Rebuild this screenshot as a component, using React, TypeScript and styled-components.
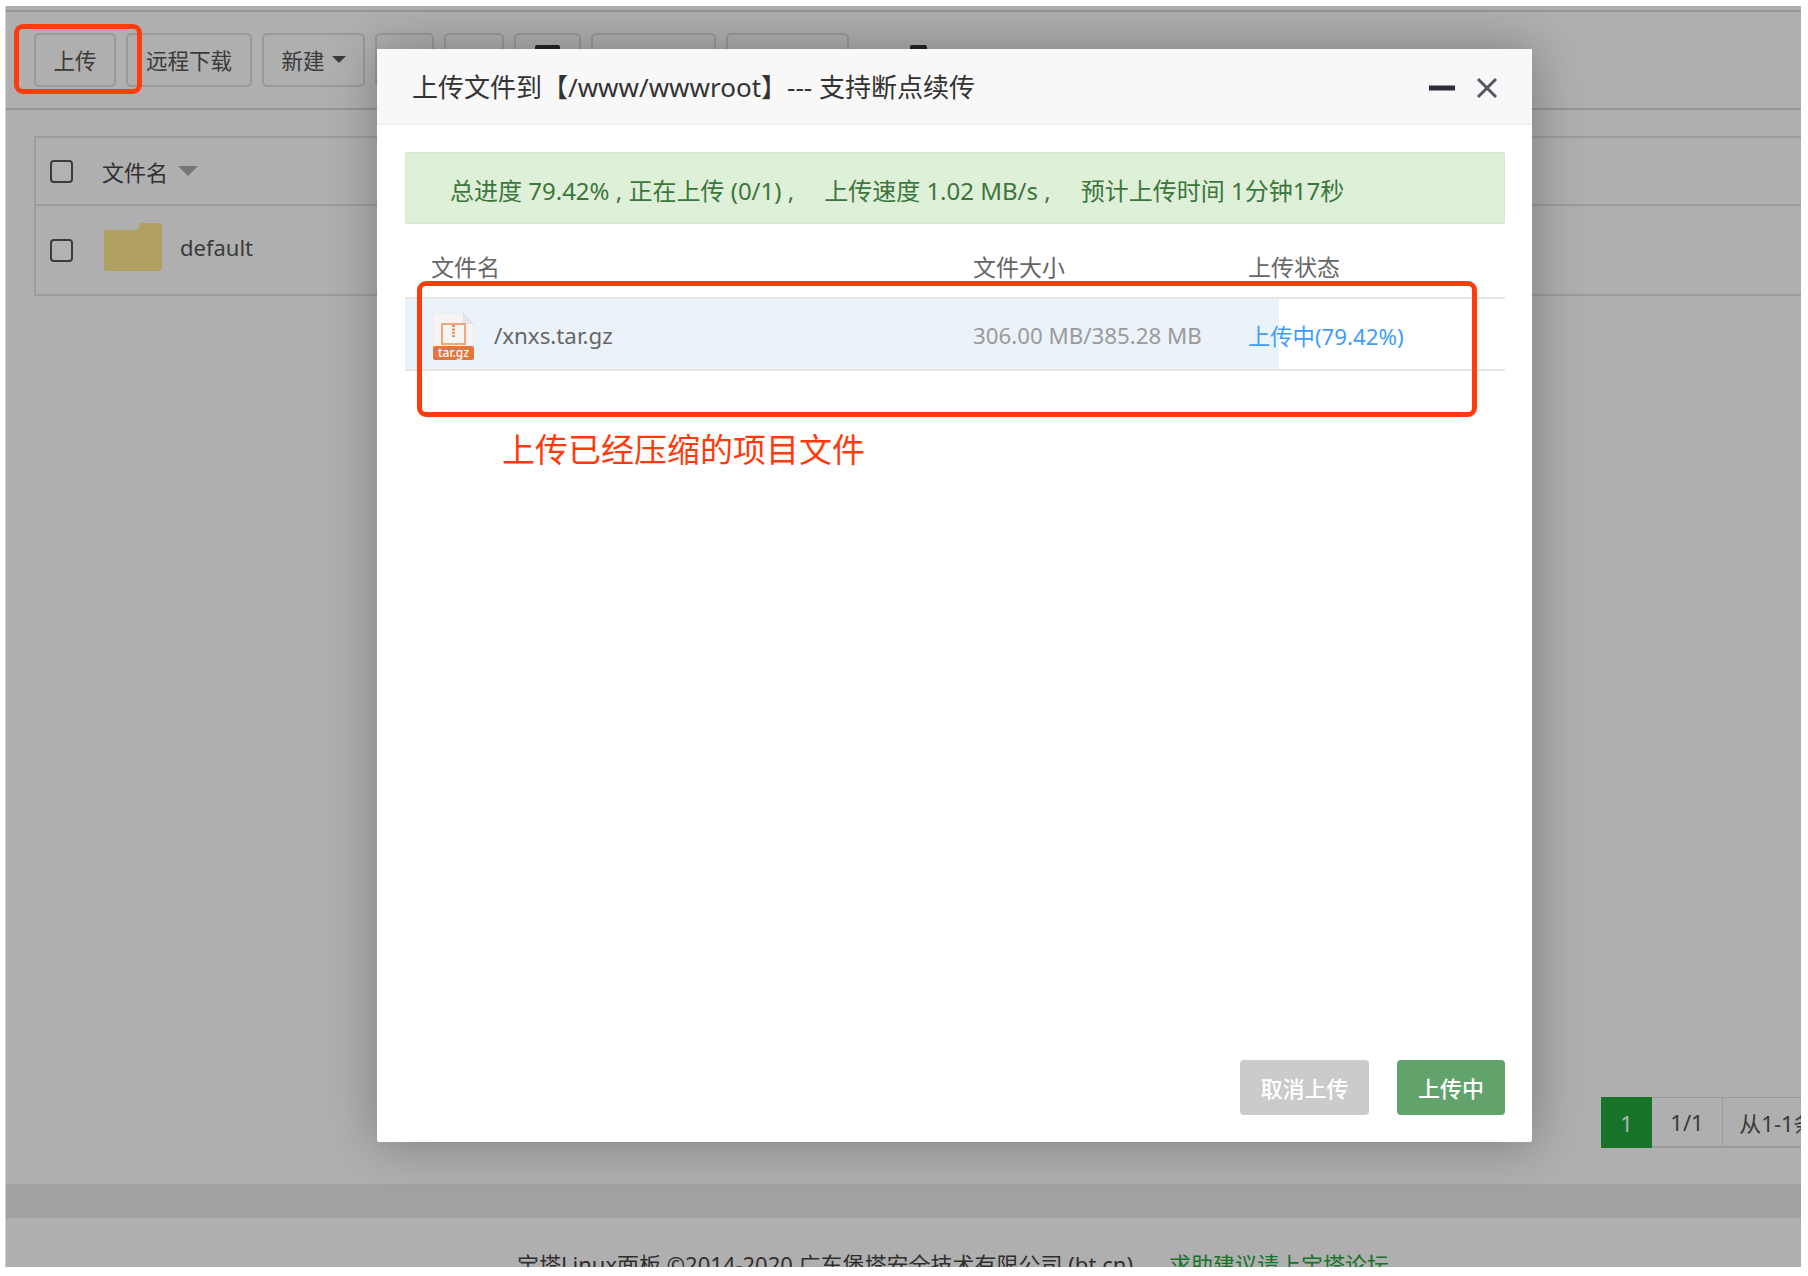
import styled, { createGlobalStyle } from "styled-components";

const fontStack = `"Noto Sans", "Noto Sans CJK SC", "Liberation Sans", sans-serif`;

const GlobalStyle = createGlobalStyle`
  html, body {
    margin: 0;
    padding: 0;
    background: #ffffff;
    font-family: ${fontStack};
  }
  * {
    box-sizing: border-box;
  }
`;

const Root = styled.div`
  position: relative;
  width: 1808px;
  height: 1276px;
  overflow: hidden;
  background: #ffffff;
`;

const Panel = styled.div`
  position: relative;
  display: flex;
  flex-direction: column;
  width: 1796px;
  height: 1261px;
  margin: 6px 0 0 5px;
  overflow: hidden;
  background: #fbfbfb;
  border-left: 1px solid #cfcfcf;

  & > * {
    flex: none;
  }
`;

const Dim = styled.div`
  position: absolute;
  inset: 0;
  background: rgba(0, 0, 0, 0.3);
`;

const Toolbar = styled.div`
  display: flex;
  gap: 10px;
  height: 100px;
  margin-top: 4px;
  padding: 21px 0 0 28px;
  border-top: 2px solid #d6d6d6;
  border-bottom: 2px solid #d6d6d6;
`;

const ToolButton = styled.div<{ $w: number }>`
  display: flex;
  align-items: center;
  justify-content: center;
  gap: 7px;
  width: ${(p) => p.$w}px;
  height: 54px;
  padding-bottom: 1px;
  color: #555555;
  font-size: 21.5px;
  background: #fbfbfb;
  border: 2px solid #dcdcdc;
  border-radius: 5px;
`;

const ToolGlyph = styled.span<{ $w: number; $ml?: number }>`
  width: ${(p) => p.$w}px;
  height: 30px;
  margin-left: ${(p) => p.$ml ?? 0}px;
  background: #333333;
  border-radius: 2px 2px 0 0;
`;

const HiddenGlyph = styled(ToolGlyph)`
  margin-top: 12px;
`;

const Caret = styled.span<{ $size: number; $color: string }>`
  width: 0;
  height: 0;
  border-left: ${(p) => p.$size}px solid transparent;
  border-right: ${(p) => p.$size}px solid transparent;
  border-top: ${(p) => p.$size}px solid ${(p) => p.$color};
`;

const FileTable = styled.div`
  margin: 26px 0 0 28px;
  border: 2px solid #e0e0e0;
  border-right: 0;
`;

const FileRow = styled.div<{ $h: number; $line?: boolean }>`
  display: flex;
  align-items: center;
  height: ${(p) => p.$h}px;
  padding-left: 14px;
  font-size: 22px;
  color: #444444;
  border-bottom: ${(p) => (p.$line ? "2px solid #e0e0e0" : "0")};
`;

const Check = styled.span`
  width: 23px;
  height: 23px;
  background: #ffffff;
  border: 2px solid #555555;
  border-radius: 4px;
`;

const HeadLabel = styled.span`
  margin: 0 10px 0 29px;
`;

const Folder = styled.svg`
  margin: -7px 0 0 31px;
`;

const FolderName = styled.span`
  margin: -7px 0 0 18px;
  color: #555555;
`;

const Pager = styled.div`
  display: flex;
  height: 51px;
  margin: 801px 0 0 1595px;
  font-size: 22px;
  color: #555555;
`;

const PagerCell = styled.div<{ $w: number; $active?: boolean }>`
  flex: none;
  display: flex;
  align-items: center;
  justify-content: center;
  width: ${(p) => p.$w}px;
  color: ${(p) => (p.$active ? "#ffffff" : "#555555")};
  background: ${(p) => (p.$active ? "#20a53a" : "transparent")};
  border: ${(p) => (p.$active ? "0" : "1px solid #dddddd")};
  border-left: 0;
  border-bottom-width: 2px;
`;

const Band = styled.div`
  height: 34px;
  margin-top: 36px;
  background: #e8e8e8;
`;

const Footer = styled.div`
  display: flex;
  gap: 36px;
  padding: 32px 0 0 511px;
  font-size: 22px;
  line-height: 28px;
  white-space: nowrap;
  color: #444444;
`;

const FooterLink = styled.span`
  color: #20a53a;
`;

const Modal = styled.div`
  position: absolute;
  left: 377px;
  top: 49px;
  display: flex;
  flex-direction: column;
  width: 1155px;
  height: 1093px;
  background: #ffffff;
  border-radius: 2px;
  box-shadow: 1px 1px 50px rgba(0, 0, 0, 0.3);
`;

const ModalHead = styled.div`
  flex: none;
  display: flex;
  align-items: center;
  justify-content: space-between;
  height: 76px;
  padding: 0 34px 0 35px;
  color: #333333;
  font-size: 26px;
  background: #f8f8f8;
  border-bottom: 2px solid #eeeeee;
`;

const HeadIcons = styled.div`
  display: flex;
  align-items: center;
  gap: 21px;
  padding-top: 4px;
`;

const ProgressAlert = styled.div`
  flex: none;
  display: flex;
  align-items: center;
  height: 72px;
  margin: 27px 27px 0 28px;
  padding: 2px 0 0 44px;
  color: #3c763d;
  font-size: 24px;
  background: #dff0d8;
  border: 1px solid #d6e9c6;
  border-radius: 2px;
`;

const AlertPart = styled.span`
  margin-right: 30px;
  white-space: nowrap;
`;

const UploadList = styled.div`
  flex: 1;
  margin: 0 27px 0 28px;
`;

const UploadGrid = styled.div`
  display: grid;
  grid-template-columns: 542px 275px 1fr;
  align-items: center;
  padding-left: 26px;
`;

const UploadHead = styled(UploadGrid)`
  height: 75px;
  padding-top: 10px;
  color: #666666;
  font-size: 23px;
  border-bottom: 2px solid #e6e6e6;
`;

const UploadRow = styled(UploadGrid)`
  position: relative;
  height: 72px;
  padding-top: 2px;
  font-size: 22.3px;
  border-bottom: 2px solid #e6e6e6;
`;

const ProgressFill = styled.div`
  position: absolute;
  left: 0;
  top: 0;
  bottom: 0;
  background: #eaf3fa;
`;

const NameCell = styled.div`
  position: relative;
  display: flex;
  align-items: center;
  gap: 20px;
  padding-left: 2px;
  color: #666666;

  & > svg {
    margin-top: 3px;
  }
`;

const SizeCell = styled.div`
  position: relative;
  color: #9a9a9a;
`;

const StatusCell = styled.div`
  position: relative;
  color: #3f9cff;
`;

const ModalFoot = styled.div`
  flex: none;
  display: flex;
  justify-content: flex-end;
  gap: 28px;
  padding: 0 27px 27px 0;
`;

const FootButton = styled.div<{ $w: number; $bg: string }>`
  display: flex;
  align-items: center;
  justify-content: center;
  width: ${(p) => p.$w}px;
  height: 55px;
  padding-bottom: 2px;
  color: #ffffff;
  font-size: 22px;
  font-weight: 500;
  background: ${(p) => p.$bg};
  border-radius: 4px;
`;

const RedBox = styled.div`
  position: absolute;
  border: 5px solid #ff3b0d;
  border-radius: 9px;
  pointer-events: none;
`;

const TopBox = styled(RedBox)`
  left: 14px;
  top: 24px;
  width: 128px;
  height: 70px;
`;

const RowBox = styled(RedBox)`
  left: 417px;
  top: 281px;
  width: 1060px;
  height: 136px;
`;

const Note = styled.div`
  position: absolute;
  left: 502px;
  top: 427px;
  color: #ff3b0d;
  font-size: 33px;
  line-height: 46px;
  white-space: nowrap;
`;

const uploadPercent = 79.42;

function FolderIcon() {
  return (
    <Folder width="58" height="48" viewBox="0 0 58 48">
      <path
        d="M2 7h30l3-2V3q0-3 3-3h17q3 0 3 3v42q0 3-3 3H3q-3 0-3-3V9q0-2 2-2z"
        fill="#fde58c"
      />
    </Folder>
  );
}

function TarIcon() {
  return (
    <svg width="41" height="47" viewBox="0 0 41 47">
      <path d="M2 0h28l11 11v25H0V2q0-2 2-2z" fill="#f7f4f1" stroke="#e6e3e0" />
      <path d="M30 0v11h11z" fill="#e4e4e4" />
      <rect x="9" y="11" width="23" height="20" fill="none" stroke="#eda67d" strokeWidth="2" />
      <path d="M20.5 12v12" stroke="#ea8a55" strokeWidth="3" strokeDasharray="2 1.4" />
      <path d="M2 33h37q2 0 2 2v10q0 2-2 2H2q-2 0-2-2V35q0-2 2-2z" fill="#e3763a" />
      <text x="20.5" y="44" textAnchor="middle" fontSize="12" fontWeight="500" fill="#ffffff" fontFamily="Noto Sans, sans-serif">
        tar.gz
      </text>
    </svg>
  );
}

export default function App() {
  return (
    <Root>
      <GlobalStyle />
      <Panel>
        <Toolbar>
          <ToolButton $w={82}>上传</ToolButton>
          <ToolButton $w={126}>远程下载</ToolButton>
          <ToolButton $w={103}>
            新建
            <Caret $size={7} $color="#555555" />
          </ToolButton>
          <ToolButton $w={59} />
          <ToolButton $w={60} />
          <ToolButton $w={67}>
            <ToolGlyph $w={25} />
          </ToolButton>
          <ToolButton $w={125} />
          <ToolButton $w={123} />
          <HiddenGlyph $w={17} $ml={51} />
        </Toolbar>
        <FileTable>
          <FileRow $h={68} $line>
            <Check />
            <HeadLabel>文件名</HeadLabel>
            <Caret $size={10} $color="#aaaaaa" />
          </FileRow>
          <FileRow $h={88}>
            <Check />
            <FolderIcon />
            <FolderName>default</FolderName>
          </FileRow>
        </FileTable>
        <Pager>
          <PagerCell $w={51} $active>1</PagerCell>
          <PagerCell $w={71}>1/1</PagerCell>
          <PagerCell $w={110}>从1-1条</PagerCell>
        </Pager>
        <Band />
        <Footer>
          <span>宝塔Linux面板 ©2014-2020 广东堡塔安全技术有限公司 (bt.cn)</span>
          <FooterLink>求助建议请上宝塔论坛</FooterLink>
        </Footer>
        <Dim />
      </Panel>

      <Modal>
        <ModalHead>
          <span>上传文件到【/www/wwwroot】--- 支持断点续传</span>
          <HeadIcons>
            <svg width="26" height="6" viewBox="0 0 26 6">
              <rect width="26" height="5" y="0.5" fill="#2e2e3a" />
            </svg>
            <svg width="22" height="22" viewBox="0 0 22 22">
              <path d="M2 2l18 18M20 2L2 20" stroke="#555560" strokeWidth="3" fill="none" />
            </svg>
          </HeadIcons>
        </ModalHead>
        <ProgressAlert>
          <AlertPart>总进度 79.42% , 正在上传 (0/1) ,</AlertPart>
          <AlertPart>上传速度 1.02 MB/s ,</AlertPart>
          <span>预计上传时间 1分钟17秒</span>
        </ProgressAlert>
        <UploadList>
          <UploadHead>
            <span>文件名</span>
            <span>文件大小</span>
            <span>上传状态</span>
          </UploadHead>
          <UploadRow>
            <ProgressFill style={{ width: `${uploadPercent}%` }} />
            <NameCell>
              <TarIcon />
              /xnxs.tar.gz
            </NameCell>
            <SizeCell>306.00 MB/385.28 MB</SizeCell>
            <StatusCell>上传中(79.42%)</StatusCell>
          </UploadRow>
        </UploadList>
        <ModalFoot>
          <FootButton $w={129} $bg="#cbcbcb">取消上传</FootButton>
          <FootButton $w={108} $bg="#62a36b">上传中</FootButton>
        </ModalFoot>
      </Modal>

      <TopBox />
      <RowBox />
      <Note>上传已经压缩的项目文件</Note>
    </Root>
  );
}
